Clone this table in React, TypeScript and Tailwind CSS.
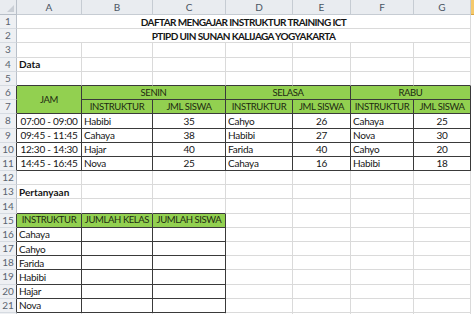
import React from "react";

type Cell = {
  text?: string;
  span?: 2 | 3 | 7;
  tall?: boolean;
  center?: boolean;
  bold?: boolean;
  green?: boolean;
  box?: boolean;
  edgeBelow?: boolean;
};

const letters = ["A", "B", "C", "D", "E", "F", "G"];

const empty = (n: number, extra: Partial<Cell> = {}): Cell[] =>
  Array.from({ length: n }, () => ({ ...extra }));

const schedule = [
  ["07:00 - 09:00", "Habibi", "35", "Cahyo", "26", "Cahaya", "25"],
  ["09:45 - 11:45", "Cahaya", "38", "Habibi", "27", "Nova", "30"],
  ["12:30 - 14:30", "Hajar", "40", "Farida", "40", "Cahyo", "20"],
  ["14:45 - 16:45", "Nova", "25", "Cahaya", "16", "Habibi", "18"],
];

const names = ["Cahaya", "Cahyo", "Farida", "Habibi", "Hajar", "Nova"];

// one entry per sheet row, cells listed left to right (merged cells take their span)
const rows: { cells: Cell[]; edge?: boolean }[] = [
  { cells: [{ text: "DAFTAR MENGAJAR INSTRUKTUR TRAINING ICT", span: 7, center: true, bold: true }] },
  { cells: [{ text: "PTIPD UIN SUNAN KALIJAGA YOGYAKARTA", span: 7, center: true, bold: true }] },
  { cells: empty(7) },
  { cells: [{ text: "Data", bold: true }, ...empty(6)] },
  { cells: empty(7, { edgeBelow: true }) },
  {
    edge: true,
    cells: [
      { text: "JAM", tall: true, center: true, green: true, box: true },
      { text: "SENIN", span: 2, center: true, green: true, box: true },
      { text: "SELASA", span: 2, center: true, green: true, box: true },
      { text: "RABU", span: 2, center: true, green: true, box: true },
    ],
  },
  {
    edge: true,
    cells: [0, 1, 2].flatMap(() => [
      { text: "INSTRUKTUR", center: true, green: true, box: true },
      { text: "JML SISWA", center: true, green: true, box: true },
    ]),
  },
  ...schedule.map((r) => ({
    edge: true,
    cells: r.map((t, i) => ({ text: t, center: i === 0 || i % 2 === 0, box: true })),
  })),
  { cells: empty(7) },
  { cells: [{ text: "Pertanyaan", bold: true }, ...empty(6)] },
  { cells: [...empty(3, { edgeBelow: true }), ...empty(4)] },
  {
    edge: true,
    cells: [
      { text: "INSTRUKTUR", center: true, green: true, box: true },
      { text: "JUMLAH KELAS", center: true, green: true, box: true },
      { text: "JUMLAH SISWA", center: true, green: true, box: true },
      ...empty(4),
    ],
  },
  ...names.map((n) => ({
    edge: true,
    cells: [{ text: n, box: true }, ...empty(2, { box: true }), ...empty(4)],
  })),
  { cells: empty(7) },
];

function SheetCell({ c }: { c: Cell }) {
  const span =
    c.span === 7 ? "col-span-7" : c.span === 3 ? "col-span-3" : c.span === 2 ? "col-span-2" : "";
  const border = c.box
    ? "border-r border-b border-[#3a3a3a]"
    : c.edgeBelow
    ? "border-r border-b border-r-[#dadada] border-b-[#3a3a3a]"
    : "border-r border-b border-[#dadada]";
  const type = c.green
    ? "text-[9.5px] tracking-[-0.4px] text-[#1d2a12]"
    : c.span === 7
    ? "font-bold tracking-[-0.6px]"
    : c.bold
    ? "font-bold"
    : "tracking-[-0.25px]";
  return (
    <div
      className={`${span} ${c.tall ? "row-span-2" : ""} ${border} ${
        c.green ? "bg-[#92d050]" : "bg-white"
      } ${c.center ? "justify-center" : "justify-start pl-[2px]"} ${type} flex items-center overflow-hidden whitespace-nowrap leading-none`}
    >
      {c.text}
    </div>
  );
}

export default function App() {
  return (
    <div className="w-[474px] h-[314px] overflow-hidden bg-white font-['Lato',sans-serif] text-[10px] text-[#151515]">
      <div className="grid grid-cols-[17px_65px_71px_73px_67px_58px_63px_57px_3px] grid-rows-[15px] auto-rows-[14.2px]">
        {/* column headings */}
        <div className="relative bg-[#e9ecf0] border-r border-b border-[#b9c0c9]">
          <div className="absolute right-[2px] bottom-[2px] w-0 h-0 border-l-[7px] border-l-transparent border-b-[7px] border-b-[#c9ced5]" />
        </div>
        {letters.map((l) => (
          <div
            key={l}
            className="flex items-center justify-center bg-[#e9ecf0] border-r border-b border-[#c6ccd3] text-[#4a5563]"
          >
            {l}
          </div>
        ))}
        <div className="bg-[#f5c96a] border-b border-[#d9a440]" />

        {rows.map((r, i) => (
          <React.Fragment key={i}>
            <div
              className={`flex items-center justify-center bg-[#eef0f3] border-b border-[#d6dbe1] border-r text-[#5a6470] ${
                r.edge ? "border-r-[#3a3a3a]" : "border-r-[#b9c0c9]"
              }`}
            >
              {i + 1}
            </div>
            {r.cells.map((c, j) => (
              <SheetCell key={j} c={c} />
            ))}
            <div className="bg-white" />
          </React.Fragment>
        ))}
      </div>
    </div>
  );
}
